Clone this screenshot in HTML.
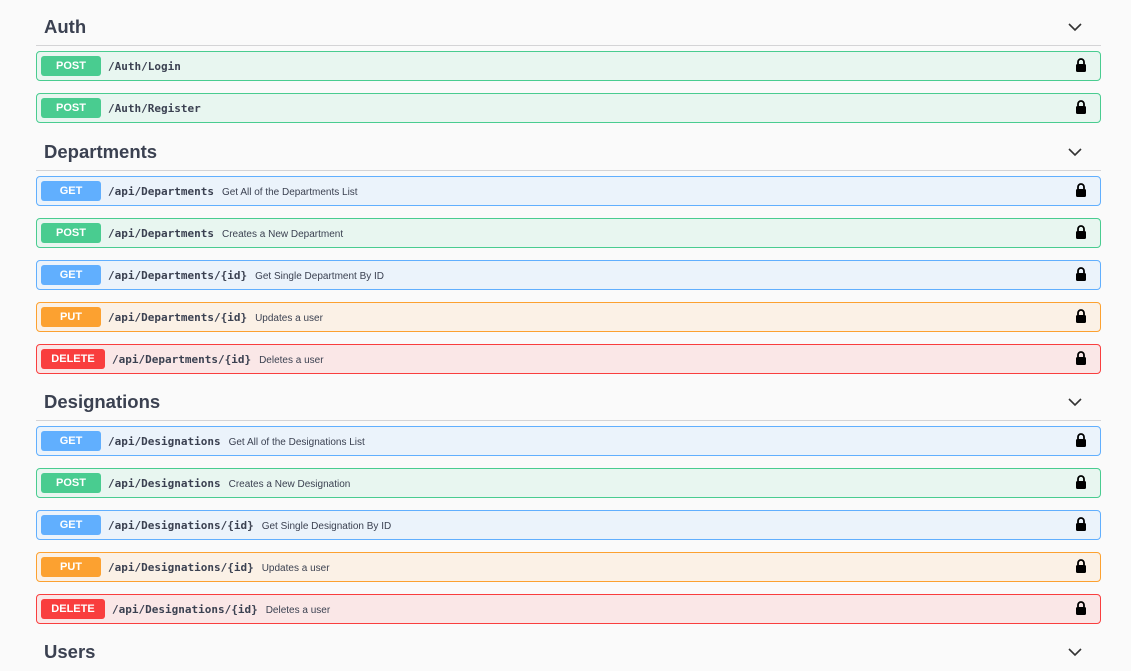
<!DOCTYPE html><html><head><style>
body{margin:0;background:#fafafa;width:1131px;height:671px;overflow:hidden;position:relative;font-family:"Liberation Sans",Arial,sans-serif;color:#3b4151}
.t{position:absolute;left:44px;font-size:18.5px;font-weight:bold;line-height:22px}
.l{position:absolute;left:36px;width:1065px;height:1px;background:#d4d4d6}
.ch{position:absolute;left:1068px;width:14px;height:10px}
.op{position:absolute;left:36px;width:1063px;height:28px;border:1px solid;border-radius:4px;box-sizing:content-box}
.b{position:absolute;left:4px;top:4px;width:60px;height:20px;border-radius:3px;color:#fff;font-weight:bold;font-size:11px;line-height:20px;text-align:center}
.p{position:absolute;left:71px;top:1px;line-height:28px;font-family:"DejaVu Sans Mono","Liberation Mono",monospace;font-weight:bold;font-size:11px;color:#3b4151;white-space:nowrap}
.d{font-family:"Liberation Sans",Arial,sans-serif;font-weight:normal;font-size:10px;margin-left:8px}
.lk{position:absolute;right:13px;top:6px}
.post{border-color:#49cc90;background:#e8f6f0}.post .b{background:#49cc90}
.get{border-color:#61affe;background:#ebf3fb}.get .b{background:#61affe}
.put{border-color:#fca130;background:#fbf1e6}.put .b{background:#fca130}
.del{border-color:#f93e3e;background:#fae7e7}.del .b{background:#f93e3e;width:64px}.del .p{left:75px}
</style></head><body>
<svg width="0" height="0" style="position:absolute"><defs>
<symbol id="lk" viewBox="0 0 12 14"><path d="M3 6V4a3 3 0 0 1 6 0v2" fill="none" stroke="#000" stroke-width="1.8"/><rect x="1" y="6" width="10" height="8" rx="1.5" fill="#000"/></symbol>
<symbol id="ch" viewBox="0 0 14 10"><path d="M1 2l6 6 6-6" fill="none" stroke="#333" stroke-width="1.6"/></symbol>
</defs></svg>

<div class="t" style="top:16px">Auth</div><svg class="ch" style="top:22px"><use href="#ch"/></svg><div class="l" style="top:45px"></div>
<div class="op post" style="top:51px"><div class="b">POST</div><div class="p">/Auth/Login</div><svg class="lk" width="12" height="14"><use href="#lk"/></svg></div>
<div class="op post" style="top:93px"><div class="b">POST</div><div class="p">/Auth/Register</div><svg class="lk" width="12" height="14"><use href="#lk"/></svg></div>

<div class="t" style="top:141px">Departments</div><svg class="ch" style="top:147px"><use href="#ch"/></svg><div class="l" style="top:170px"></div>
<div class="op get" style="top:176px"><div class="b">GET</div><div class="p">/api/Departments<span class="d">Get All of the Departments List</span></div><svg class="lk" width="12" height="14"><use href="#lk"/></svg></div>
<div class="op post" style="top:218px"><div class="b">POST</div><div class="p">/api/Departments<span class="d">Creates a New Department</span></div><svg class="lk" width="12" height="14"><use href="#lk"/></svg></div>
<div class="op get" style="top:260px"><div class="b">GET</div><div class="p">/api/Departments/{id}<span class="d">Get Single Department By ID</span></div><svg class="lk" width="12" height="14"><use href="#lk"/></svg></div>
<div class="op put" style="top:302px"><div class="b">PUT</div><div class="p">/api/Departments/{id}<span class="d">Updates a user</span></div><svg class="lk" width="12" height="14"><use href="#lk"/></svg></div>
<div class="op del" style="top:344px"><div class="b">DELETE</div><div class="p">/api/Departments/{id}<span class="d">Deletes a user</span></div><svg class="lk" width="12" height="14"><use href="#lk"/></svg></div>

<div class="t" style="top:391px">Designations</div><svg class="ch" style="top:397px"><use href="#ch"/></svg><div class="l" style="top:420px"></div>
<div class="op get" style="top:426px"><div class="b">GET</div><div class="p">/api/Designations<span class="d">Get All of the Designations List</span></div><svg class="lk" width="12" height="14"><use href="#lk"/></svg></div>
<div class="op post" style="top:468px"><div class="b">POST</div><div class="p">/api/Designations<span class="d">Creates a New Designation</span></div><svg class="lk" width="12" height="14"><use href="#lk"/></svg></div>
<div class="op get" style="top:510px"><div class="b">GET</div><div class="p">/api/Designations/{id}<span class="d">Get Single Designation By ID</span></div><svg class="lk" width="12" height="14"><use href="#lk"/></svg></div>
<div class="op put" style="top:552px"><div class="b">PUT</div><div class="p">/api/Designations/{id}<span class="d">Updates a user</span></div><svg class="lk" width="12" height="14"><use href="#lk"/></svg></div>
<div class="op del" style="top:594px"><div class="b">DELETE</div><div class="p">/api/Designations/{id}<span class="d">Deletes a user</span></div><svg class="lk" width="12" height="14"><use href="#lk"/></svg></div>

<div class="t" style="top:641px">Users</div><svg class="ch" style="top:647px"><use href="#ch"/></svg>
</body></html>
